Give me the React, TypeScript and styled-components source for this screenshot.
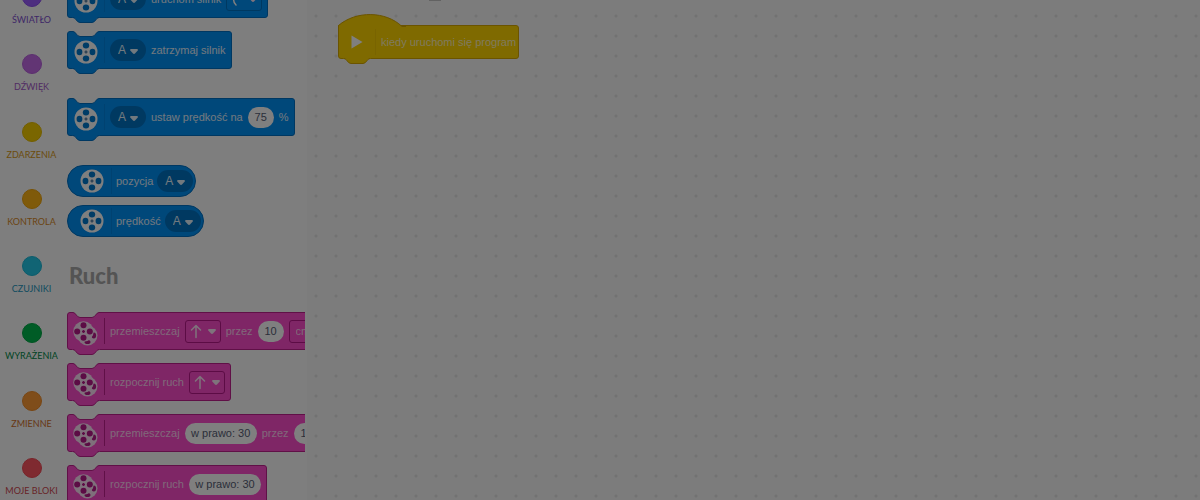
import React from "react";
import styled, { createGlobalStyle } from "styled-components";

const GlobalStyle = createGlobalStyle`
  *, *::before, *::after { box-sizing: border-box; }
  body { margin: 0; background: #fcfcfc; overflow: hidden; }
  body, button, input, select { font-family: "Liberation Sans", Arial, sans-serif; font-size: 11px; }
  ul { list-style: none; margin: 0; padding: 0; }
`;

type Kind = "motor" | "move" | "event";

const palette: Record<Kind, { fill: string; edge: string; dark: string; text: string }> = {
  motor: { fill: "#0090f5", edge: "#0070c4", dark: "#0072c3", text: "#e4f2fd" },
  move: { fill: "#ff4ccd", edge: "#c0218f", dark: "#b8188a", text: "#ffd2f2" },
  event: { fill: "#ffd500", edge: "#d6a800", dark: "#cc9900", text: "#fff4bf" },
};

const Editor = styled.div`
  position: relative;
  display: grid;
  grid-template-columns: 63px 242px 1fr;
  height: 100vh;
  overflow: hidden;
`;

const Categories = styled.nav`
  display: grid;
  grid-auto-rows: 1fr;
  min-height: 538px;
  align-self: start;
  margin-top: -13px;
`;

const Category = styled.button<{ $ink: string }>`
  display: flex;
  flex-direction: column;
  align-items: center;
  gap: 7px;
  padding: 0;
  border: 0;
  background: none;
  color: ${(p) => p.$ink};
  font-family: Lato, sans-serif;
  font-size: 9px;
  line-height: 12px;
  white-space: nowrap;
`;

const Dot = styled.span<{ $fill: string; $edge: string }>`
  width: 20px;
  height: 20px;
  border-radius: 50%;
  border: 1px solid ${(p) => p.$edge};
  background: ${(p) => p.$fill};
`;

const Palette = styled.section`
  padding-left: 4px;
  margin-top: -20px;
  overflow: hidden;
`;

const BlockList = styled.ul<{ $gap: number }>`
  display: flex;
  flex-direction: column;
  align-items: flex-start;
  gap: ${(p) => p.$gap}px;
`;

const Heading = styled.h2`
  margin: 25px 0 22px 2px;
  color: #a8a8a8;
  font: 900 22px/28px Lato, sans-serif;
`;

const BlockBody = styled.li<{ $kind: Kind; $spaced?: boolean }>`
  position: relative;
  display: flex;
  align-items: center;
  gap: 5px;
  height: 38px;
  padding: 0 5px;
  margin-top: ${(p) => (p.$spaced ? 16 : 0)}px;
  border: 1px solid ${(p) => palette[p.$kind].edge};
  border-radius: 3px;
  background: ${(p) => palette[p.$kind].fill};
  color: ${(p) => palette[p.$kind].text};
  line-height: 14px;
  white-space: nowrap;
`;

const Reporter = styled(BlockBody)`
  height: 32px;
  gap: 4px;
  padding: 0 2px 0 12px;
  border-radius: 16px;
`;

const HatBody = styled(BlockBody)`
  height: 34px;
  width: max-content;
  padding-right: 2px;
  border-top-left-radius: 0;
`;

const Connector = styled.svg<{ $edge: "top" | "bottom" }>`
  position: absolute;
  left: 4px;
  ${(p) => (p.$edge === "top" ? "top: -1px;" : "bottom: -6px;")}
  width: 28px;
  height: 6px;
`;

const HatCurve = styled.svg`
  position: absolute;
  left: -1px;
  top: -12px;
  width: 68px;
  height: 14px;
`;

const IconCell = styled.span<{ $rule: string; $low?: boolean }>`
  display: flex;
  align-items: center;
  flex: none;
  width: 32px;
  height: 26px;
  border-right: 1px solid ${(p) => p.$rule};
  svg { margin-top: ${(p) => (p.$low ? 4 : 0)}px; }
`;

const Label = styled.span``;

const PortWrap = styled.label`
  position: relative;
  display: flex;
  svg { position: absolute; right: 8px; top: 10px; pointer-events: none; }
`;

const PortSelect = styled.select`
  appearance: none;
  width: 36px;
  height: 22px;
  padding: 0 0 0 8px;
  border: 0;
  border-radius: 11px;
  background: #0072c3;
  color: #e4f2fd;
  font-size: 12px;
`;

const ArrowMenu = styled.button<{ $kind: Kind }>`
  display: flex;
  flex: none;
  align-items: center;
  justify-content: space-between;
  width: 36px;
  height: 23px;
  padding: 0 4px;
  border: 1px solid ${(p) => palette[p.$kind].dark};
  border-radius: 3px;
  background: none;
  color: #ffe6f8;
`;

const UnitSelect = styled.select`
  appearance: none;
  width: 44px;
  height: 23px;
  padding: 0 6px;
  border: 1px solid #b8188a;
  border-radius: 3px;
  background: none;
  color: #ffd2f2;
`;

const ValueInput = styled.input<{ $w: number }>`
  flex: none;
  width: ${(p) => p.$w}px;
  height: 21px;
  padding: 0;
  border: 0;
  border-radius: 11px;
  background: #fff;
  color: #575e75;
  text-align: center;
`;

const Workspace = styled.main`
  position: relative;
  margin-left: 2px;
  padding: 25px 31px;
  background-color: #f9f9f9;
  background-image: radial-gradient(circle, #e4e4e4 1px, transparent 2px);
  background-size: 20px 20px;
  background-position: -1px 6px;
`;

const PullTab = styled.span`
  position: absolute;
  left: 122px;
  top: 0;
  width: 12px;
  height: 1px;
  background: #c4c4c4;
`;

const Backdrop = styled.div`
  position: absolute;
  inset: 0;
  background: rgba(0, 0, 0, 0.5);
`;

const Caret = () => (
  <svg width="8" height="5" viewBox="0 0 8 5" aria-hidden="true">
    <path d="M1 0h6c.8 0 1.200.8.7 1.600L5 4.500a1.400 1.400 0 0 1-2 0L.3 1.600C-.2.8.2 0 1 0Z" fill="currentColor" />
  </svg>
);

const UpArrow = () => (
  <svg width="12" height="15" viewBox="0 0 12 15" fill="none" stroke="currentColor" strokeWidth="1.5" strokeLinecap="round" strokeLinejoin="round" aria-hidden="true">
    <path d="M6 13.500V1.500M1.500 6 6 1.500 10.500 6" />
  </svg>
);

const TurnArrow = () => (
  <svg width="12" height="15" viewBox="0 0 12 15" fill="none" stroke="#fff" strokeWidth="1.5" strokeLinecap="round" aria-hidden="true">
    <path d="M5.500 1.500C2 4 1.500 10 5 13" />
  </svg>
);

const Reel = () => (
  <svg width="24" height="24" viewBox="0 0 24 24" aria-hidden="true">
    <circle cx="12" cy="12" r="11.500" fill="#fff" />
    <g fill="#0078cc">
      <ellipse cx="12" cy="5.500" rx="3.200" ry="2.900" />
      <ellipse cx="12" cy="18.500" rx="3.200" ry="2.900" />
      <ellipse cx="5.500" cy="12" rx="2.900" ry="3.200" />
      <ellipse cx="18.500" cy="12" rx="2.900" ry="3.200" />
    </g>
    <path d="M12 10.500v3M10.500 12h3" stroke="#5d86a8" strokeWidth="1.600" />
  </svg>
);

const DoubleReel = () => (
  <svg width="26" height="26" viewBox="0 0 26 26" aria-hidden="true">
    <circle cx="14.500" cy="15.500" r="10" fill="#ffe0f6" />
    <ellipse cx="20.800" cy="15.500" rx="2.300" ry="3" fill="#b8188a" />
    <ellipse cx="14.500" cy="22" rx="3" ry="2" fill="#b8188a" />
    <circle cx="10.500" cy="11.500" r="10.200" fill="#ffe0f6" />
    <g fill="#b8188a">
      <circle cx="10.500" cy="5.200" r="3" />
      <circle cx="10.500" cy="17.800" r="3" />
      <circle cx="4.200" cy="11.500" r="3" />
      <circle cx="16.800" cy="11.500" r="3" />
    </g>
    <path d="M10.500 10v3M9 11.500h3" stroke="#b8188a" strokeWidth="1.300" />
  </svg>
);

const connectorLine = "M0 .5H1C4 .5 4.500 5.500 8 5.500H20C23.500 5.500 24 .5 27 .5H28";

function Connectors({ kind, top = true }: { kind: Kind; top?: boolean }) {
  const c = palette[kind];
  return (
    <>
      {top && (
        <Connector $edge="top" viewBox="0 0 28 6" aria-hidden="true">
          <path d={connectorLine + "V0H0Z"} fill="#fcfcfc" />
          <path d={connectorLine} fill="none" stroke={c.edge} />
        </Connector>
      )}
      <Connector $edge="bottom" viewBox="0 0 28 6" aria-hidden="true">
        <path d={connectorLine + "V0H0Z"} fill={c.fill} />
        <path d="M1 .5C4 .5 4.500 5.500 8 5.500H20C23.500 5.500 24 .5 27 .5" fill="none" stroke={c.edge} />
      </Connector>
    </>
  );
}

const ReelInset = styled.span`
  display: flex;
  padding-left: 1px;
`;

function MotorBlock({ spaced, children }: { spaced?: boolean; children: React.ReactNode }) {
  return (
    <BlockBody $kind="motor" $spaced={spaced}>
      <Connectors kind="motor" />
      <IconCell $rule="#0084e2" $low>
        <ReelInset><Reel /></ReelInset>
      </IconCell>
      {children}
    </BlockBody>
  );
}

function MoveBlock({ children }: { children: React.ReactNode }) {
  return (
    <BlockBody $kind="move">
      <Connectors kind="move" />
      <IconCell $rule="#c0218f" $low><DoubleReel /></IconCell>
      {children}
    </BlockBody>
  );
}

const Port = () => (
  <PortWrap>
    <PortSelect aria-label="Port" defaultValue="A">
      <option>A</option>
      <option>B</option>
    </PortSelect>
    <Caret />
  </PortWrap>
);

const Direction = ({ kind, turn }: { kind: Kind; turn?: boolean }) => (
  <ArrowMenu $kind={kind} type="button" aria-label="Kierunek" aria-haspopup="listbox">
    {turn ? <TurnArrow /> : <UpArrow />}
    <Caret />
  </ArrowMenu>
);

const Value = ({ value, w = 26, name }: { value: string; w?: number; name: string }) => (
  <ValueInput $w={w} defaultValue={value} aria-label={name} />
);

const ReporterList = styled(BlockList)`
  margin-top: 29px;
`;

const categories = [
  { name: "ŚWIATŁO", fill: "#9a5cff", edge: "#8c4ef0", ink: "#7c4fd0" },
  { name: "DŹWIĘK", fill: "#c46be8", edge: "#b860de", ink: "#a458c8" },
  { name: "ZDARZENIA", fill: "#f5cc00", edge: "#e6bc00", ink: "#d89a20" },
  { name: "KONTROLA", fill: "#ffb515", edge: "#f0a408", ink: "#d88a28" },
  { name: "CZUJNIKI", fill: "#22c8e8", edge: "#18b8d8", ink: "#2498c0" },
  { name: "WYRAŻENIA", fill: "#00b84c", edge: "#00a844", ink: "#008a48" },
  { name: "ZMIENNE", fill: "#ff9a35", edge: "#f08c28", ink: "#d0702c" },
  { name: "MOJE BLOKI", fill: "#ff5560", edge: "#f04854", ink: "#d04850" },
];

export default function App() {
  return (
    <>
      <GlobalStyle />
      <Editor>
        <Categories>
          {categories.map((c) => (
            <Category key={c.name} type="button" $ink={c.ink}>
              <Dot $fill={c.fill} $edge={c.edge} />
              {c.name}
            </Category>
          ))}
        </Categories>

        <Palette>
          <BlockList $gap={13}>
            <MotorBlock>
              <Port />
              <Label>uruchom silnik</Label>
              <Direction kind="motor" turn />
            </MotorBlock>
            <MotorBlock>
              <Port />
              <Label>zatrzymaj silnik</Label>
            </MotorBlock>
            <MotorBlock spaced>
              <Port />
              <Label>ustaw prędkość na</Label>
              <Value value="75" name="Prędkość" />
              <Label>%</Label>
            </MotorBlock>
          </BlockList>
          <ReporterList $gap={8}>
            {["pozycja", "prędkość"].map((name) => (
              <Reporter key={name} $kind="motor">
                <IconCell $rule="#0084e2"><Reel /></IconCell>
                <Label>{name}</Label>
                <Port />
              </Reporter>
            ))}
          </ReporterList>
          <Heading>Ruch</Heading>
          <BlockList $gap={13}>
            <MoveBlock>
              <Label>przemieszczaj</Label>
              <Direction kind="move" />
              <Label>przez</Label>
              <Value value="10" name="Odległość" />
              <UnitSelect aria-label="Jednostka" defaultValue="cm">
                <option>cm</option>
                <option>cale</option>
              </UnitSelect>
            </MoveBlock>
            <MoveBlock>
              <Label>rozpocznij ruch</Label>
              <Direction kind="move" />
            </MoveBlock>
            <MoveBlock>
              <Label>przemieszczaj</Label>
              <Value value="w prawo: 30" w={72} name="Skręt" />
              <Label>przez</Label>
              <Value value="10" name="Odległość" />
            </MoveBlock>
            <MoveBlock>
              <Label>rozpocznij ruch</Label>
              <Value value="w prawo: 30" w={72} name="Skręt" />
            </MoveBlock>
          </BlockList>
        </Palette>

        <Workspace>
          <PullTab />
          <HatBody as="div" $kind="event">
            <HatCurve viewBox="0 0 68 14" aria-hidden="true">
              <path d="M.5 14V11.500C18-3.500 48-3 64 12.500H68V14Z" fill="#ffd500" />
              <path d="M.5 14V11.500C18-3.500 48-3 64 12.500H68" fill="none" stroke="#d6a800" />
            </HatCurve>
            <Connectors kind="event" top={false} />
            <IconCell $rule="#f2c800">
              <svg width="26" height="14" viewBox="0 0 26 14" aria-hidden="true">
                <path d="M7.500 .5v13L18.500 7Z" fill="#fff" />
              </svg>
            </IconCell>
            <Label>kiedy uruchomi się program</Label>
          </HatBody>
        </Workspace>
        <Backdrop />
      </Editor>
    </>
  );
}
